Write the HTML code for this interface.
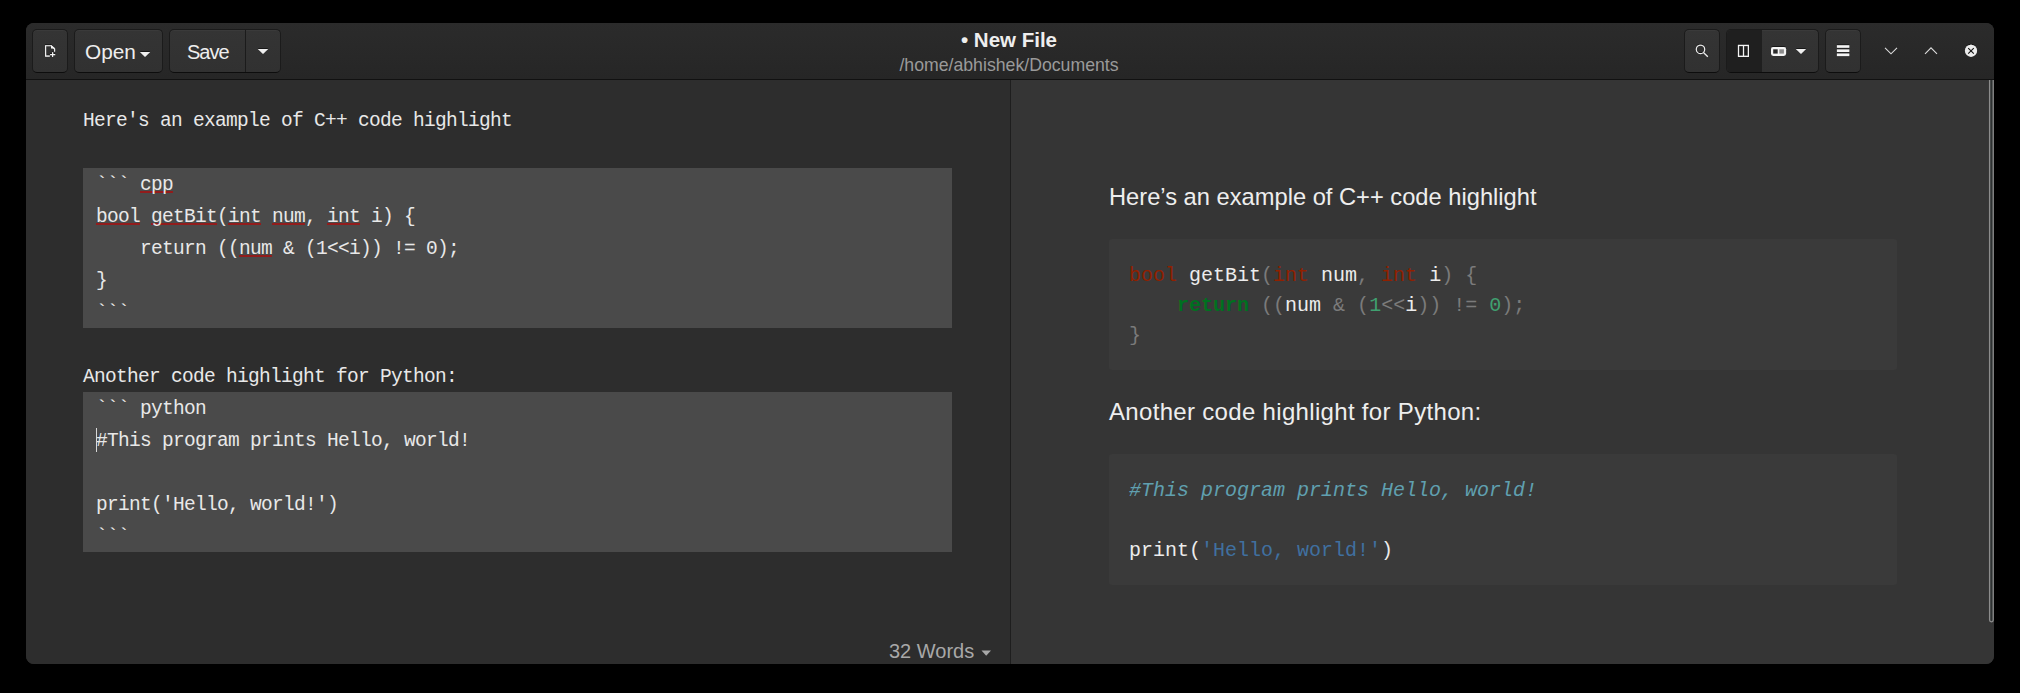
<!DOCTYPE html>
<html><head><meta charset="utf-8">
<style>
*{margin:0;padding:0;box-sizing:border-box}
html,body{width:2020px;height:693px;background:#000;overflow:hidden}
body{position:relative;font-family:"Liberation Sans",sans-serif}
.a{position:absolute}
#win{position:absolute;left:26px;top:23px;width:1968px;height:641px;border-radius:8px;overflow:hidden;background:#2d2d2d}
#hdr{position:absolute;left:0;top:0;width:1968px;height:57px;background:linear-gradient(to bottom,#2b2b2b,#262626);border-bottom:1px solid #111111}
.btn{position:absolute;top:6px;height:44px;background:linear-gradient(to bottom,#343434,#313131);border-radius:5px;border:1px solid #1b1b1b;border-bottom-color:#0d0d0d;box-shadow:inset 0 1px 0 rgba(255,255,255,0.03)}
#left{position:absolute;left:0;top:57px;width:984px;height:584px;background:#2d2d2d}
#div{position:absolute;left:984px;top:57px;width:1px;height:584px;background:#1e1e1e}
#right{position:absolute;left:985px;top:57px;width:983px;height:584px;background:#353535}
.ed{position:absolute;font-family:"Liberation Mono",monospace;font-size:19.5px;letter-spacing:-0.7px;line-height:32px;height:32px;margin-top:1.2px;color:#e8e8e8;white-space:pre}
.cb{position:absolute;background:#4a4a4a}
.pv{position:absolute;font-family:"Liberation Mono",monospace;font-size:20px;line-height:30px;height:30px;color:#ececec;white-space:pre}
.pcb{position:absolute;background:#3a3a3a;border-radius:3px}
.h{position:absolute;font-family:"Liberation Sans",sans-serif;color:#eeeeee;white-space:pre;font-size:24px;line-height:30px}
.ul{position:absolute;height:2px;background:#921c1c}
.kt{color:#902000}.kw{color:#007020;font-weight:bold}.p{color:#7b7b7b}.n{color:#40a070}.s{color:#4070a0}.c{color:#60a0b0;font-style:italic}
</style></head><body>
<div id="win">
  <div id="hdr">
    <div class="btn" style="left:6px;width:36px"></div>
    <div class="btn" style="left:48px;width:89px"></div>
    <div class="btn" style="left:143px;width:112px"><div style="position:absolute;left:75px;top:0;width:1px;height:42px;background:#1b1b1b"></div></div>
    <div class="btn" style="left:1658px;width:36px"></div>
    <div class="btn" style="left:1700px;width:93px"><div style="position:absolute;left:0;top:0;width:35px;height:42px;background:#1f1f1f;border-radius:4px 0 0 4px"></div></div>
    <div class="btn" style="left:1799px;width:36px"></div>
  </div>
  <div id="left"></div>
  <div id="div"></div>
  <div id="right"></div>
</div>

<!-- header text -->
<div class="a" style="left:-9px;width:2020px;top:28px;text-align:center;font-weight:bold;font-size:20.5px;line-height:24px;color:#eeeeee;padding-left:16px">• New File</div>
<div class="a" style="left:-9px;width:2020px;top:54px;text-align:center;font-size:17.7px;line-height:22px;color:#9a9a9a;padding-left:16px">/home/abhishek/Documents</div>
<div class="a" style="left:85px;top:39.5px;font-size:20.8px;line-height:24px;color:#eeeeee">Open</div>
<div class="a" style="left:187px;top:39.5px;font-size:20px;letter-spacing:-1px;line-height:24px;color:#eeeeee">Save</div>
<div class="a" style="left:889px;top:639px;font-size:20px;line-height:24px;color:#a8a8a8">32 Words</div>

<!-- left editor -->
<div class="cb" style="left:83px;top:168px;width:869px;height:160px"></div>
<div class="cb" style="left:83px;top:392px;width:869px;height:160px"></div>

<div class="ul" style="left:140px;top:191px;width:33px"></div>
<div class="ul" style="left:96px;top:223px;width:44px"></div>
<div class="ul" style="left:151px;top:223px;width:66px"></div>
<div class="ul" style="left:228px;top:223px;width:33px"></div>
<div class="ul" style="left:272px;top:223px;width:33px"></div>
<div class="ul" style="left:327px;top:223px;width:33px"></div>
<div class="ul" style="left:239px;top:255px;width:33px"></div>

<div class="ed" style="left:83px;top:104px">Here's an example of C++ code highlight</div>
<div class="ed" style="left:96px;top:168px">``` cpp</div>
<div class="ed" style="left:96px;top:200px">bool getBit(int num, int i) {</div>
<div class="ed" style="left:96px;top:232px">    return ((num &amp; (1&lt;&lt;i)) != 0);</div>
<div class="ed" style="left:96px;top:264px">}</div>
<div class="ed" style="left:96px;top:296px">```</div>
<div class="ed" style="left:83px;top:360px">Another code highlight for Python:</div>
<div class="ed" style="left:96px;top:392px">``` python</div>
<div class="ed" style="left:96px;top:424px">#This program prints Hello, world!</div>
<div class="ed" style="left:96px;top:488px">print('Hello, world!')</div>
<div class="ed" style="left:96px;top:520px">```</div>

<div class="a" style="left:96px;top:428px;width:1px;height:24px;background:#d8d8d8"></div>
<!-- right preview -->
<div class="h" style="left:1109px;top:182px;font-size:23.7px">Here’s an example of C++ code highlight</div>
<div class="pcb" style="left:1109px;top:239px;width:788px;height:131px"></div>
<div class="pv" style="left:1129px;top:261px"><span class="kt">bool</span> getBit<span class="p">(</span><span class="kt">int</span> num<span class="p">,</span> <span class="kt">int</span> i<span class="p">)</span> <span class="p">{</span></div>
<div class="pv" style="left:1129px;top:291px">    <span class="kw">return</span> <span class="p">((</span>num <span class="p">&amp;</span> <span class="p">(</span><span class="n">1</span><span class="p">&lt;&lt;</span>i<span class="p">))</span> <span class="p">!=</span> <span class="n">0</span><span class="p">);</span></div>
<div class="pv" style="left:1129px;top:321px"><span class="p">}</span></div>
<div class="h" style="left:1109px;top:397px;letter-spacing:0.32px">Another code highlight for Python:</div>
<div class="pcb" style="left:1109px;top:454px;width:788px;height:131px"></div>
<div class="pv" style="left:1129px;top:476px"><span class="c">#This program prints Hello, world!</span></div>
<div class="pv" style="left:1129px;top:536px">print(<span class="s">'Hello, world!'</span>)</div>

<svg class="a" style="left:0;top:0" width="2020" height="693" viewBox="0 0 2020 693">
<defs><filter id="sh" x="-50%" y="-50%" width="200%" height="200%"><feDropShadow dx="0" dy="-0.6" stdDeviation="0.4" flood-color="#000" flood-opacity="0.9"/></filter></defs>
<g filter="url(#sh)">
 <!-- doc new -->
 <path d="M45.6,51 V45.7 H51.2 L54.6,49.1 V51.8 M45.6,51 V56.1 H49.8" fill="none" stroke="#f4f4f4" stroke-width="1.1"/>
 <path d="M51,45.2 L55.2,48.5 H51 Z" fill="#f4f4f4"/>
 <path d="M50.1,54.6 H55.2 M52.6,52.2 V56.9" fill="none" stroke="#f4f4f4" stroke-width="1.1"/>
 <!-- open arrow -->
 <path d="M139.9,51.9 H150.2 L145,57 Z" fill="#f0f0f0"/>
 <!-- save arrow -->
 <path d="M257.8,48.9 H268.2 L263,54.1 Z" fill="#f0f0f0"/>
 <!-- search -->
 <circle cx="1700.5" cy="49.4" r="4.2" fill="none" stroke="#eeeeee" stroke-width="1.15"/>
 <path d="M1703.5,52.6 L1707.8,56.8" stroke="#eeeeee" stroke-width="1.2" fill="none"/>
 <!-- split icon -->
 <rect x="1738.5" y="45.5" width="9.9" height="10.9" fill="none" stroke="#f4f4f4" stroke-width="1.2"/>
 <path d="M1743.5,45.5 V56.4" stroke="#f4f4f4" stroke-width="1.2"/>
 <!-- preview dropdown icon -->
 <rect x="1771" y="46.9" width="15.1" height="9.1" rx="2.4" fill="#f4f4f4"/>
 <rect x="1773.2" y="49.3" width="4.5" height="4.3" fill="#2c2c2c"/>
 <rect x="1779.3" y="49.3" width="4.6" height="4.3" fill="#8c8c8c"/>
 <path d="M1795.8,48.9 H1806.1 L1801,53.9 Z" fill="#f0f0f0"/>
 <!-- hamburger -->
 <rect x="1836.9" y="45.3" width="12.4" height="2.5" fill="#f4f4f4"/>
 <rect x="1836.9" y="49.5" width="12.4" height="2.5" fill="#f4f4f4"/>
 <rect x="1836.9" y="53.6" width="12.4" height="2.5" fill="#f4f4f4"/>
 <!-- close -->
 <circle cx="1971" cy="50.8" r="6.1" fill="#ececec"/>
</g>
 <path d="M1968.2,48.1 L1973.8,53.6 M1973.8,48.1 L1968.2,53.6" stroke="#111" stroke-width="1.1"/>
 <path d="M1885,47.8 L1891,53.8 L1897,47.8" fill="none" stroke="#dddddd" stroke-width="1.1"/>
 <path d="M1925,53.8 L1931,47.8 L1937,53.8" fill="none" stroke="#dddddd" stroke-width="1.1"/>
 <!-- words arrow -->
 <path d="M981.5,650.5 H991 L986.2,655.8 Z" fill="#a8a8a8"/>
 <!-- scrollbar -->
 <path d="M1989.6,80 V620 A1.8,1.8 0 0 0 1993.2,620 V80" fill="#2e3232" stroke="#8c8c8c" stroke-width="1.3"/>
</svg>
</body></html>
